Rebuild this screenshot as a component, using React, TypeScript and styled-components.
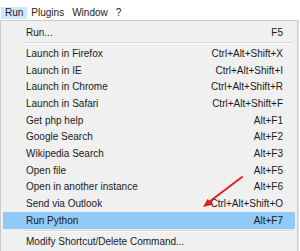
import styled, { createGlobalStyle } from 'styled-components';

type Item = { label: string; shortcut?: string; active?: boolean };

const topItems: Item[] = [{ label: 'Run...', shortcut: 'F5' }];

const launchItems: Item[] = [
  { label: 'Launch in Firefox', shortcut: 'Ctrl+Alt+Shift+X' },
  { label: 'Launch in IE', shortcut: 'Ctrl+Alt+Shift+I' },
  { label: 'Launch in Chrome', shortcut: 'Ctrl+Alt+Shift+R' },
  { label: 'Launch in Safari', shortcut: 'Ctrl+Alt+Shift+F' },
  { label: 'Get php help', shortcut: 'Alt+F1' },
  { label: 'Google Search', shortcut: 'Alt+F2' },
  { label: 'Wikipedia Search', shortcut: 'Alt+F3' },
  { label: 'Open file', shortcut: 'Alt+F5' },
  { label: 'Open in another instance', shortcut: 'Alt+F6' },
  { label: 'Send via Outlook', shortcut: 'Ctrl+Alt+Shift+O' },
  { label: 'Run Python', shortcut: 'Alt+F7', active: true },
];

const bottomItems: Item[] = [{ label: 'Modify Shortcut/Delete Command...' }];

const renderItems = (items: Item[]) =>
  items.map((item) => (
    <Row key={item.label} $active={item.active}>
      <Label>{item.label}</Label>
      {item.shortcut && <Shortcut>{item.shortcut}</Shortcut>}
    </Row>
  ));

const App = () => {
  return (
    <Page>
      <GlobalStyle />
      <MenuBar>
        <BarItem $open>Run</BarItem>
        <BarItem>Plugins</BarItem>
        <BarItem>Window</BarItem>
        <BarItem>?</BarItem>
      </MenuBar>

      <Dropdown>
        {renderItems(topItems)}
        <Separator />
        {renderItems(launchItems)}
        <Separator />
        {renderItems(bottomItems)}
      </Dropdown>

      <Arrow width="300" height="251" viewBox="0 0 300 251">
        <line x1="242" y1="177" x2="209" y2="202" stroke="#e3211c" strokeWidth="2" strokeLinecap="round" />
        <polygon points="203,207 207.5,199 213.5,204.5" fill="#e3211c" />
      </Arrow>
    </Page>
  );
};

export default App;

const GlobalStyle = createGlobalStyle`
  body {
    margin: 0;
    background: #ffffff;
    font-family: "Liberation Sans", Arial, sans-serif;
  }
`;

const Page = styled.div`
  position: relative;
  width: 300px;
  height: 251px;
  overflow: hidden;
  background: #ffffff;
  color: #1a1a1a;
  font-size: 10px;
`;

const MenuBar = styled.div`
  display: flex;
  align-items: flex-end;
  height: 20px;
  padding-left: 1px;
  box-sizing: border-box;
`;

const BarItem = styled.div<{ $open?: boolean }>`
  height: 12px;
  line-height: 12px;
  padding: 0 4px 0 4px;
  margin-bottom: 1px;
  background: ${({ $open }) => ($open ? '#cce8ff' : 'transparent')};
`;

const Dropdown = styled.div`
  width: 298px;
  box-sizing: border-box;
  border: 1px solid #cccccc;
  border-bottom: none;
  background: #f0f0f0;
  padding: 3px 2px 4px 2px;
  box-shadow: 1px 0 0 #e4e4e4;
`;

const Row = styled.div<{ $active?: boolean }>`
  display: flex;
  align-items: center;
  justify-content: space-between;
  height: 16.7px;
  padding: 0 12px 0 23px;
  background: ${({ $active }) => ($active ? '#91c9f7' : 'transparent')};
`;

const Label = styled.span`
  white-space: nowrap;
`;

const Shortcut = styled.span`
  white-space: nowrap;
`;

const Separator = styled.div`
  height: 1px;
  margin: 1px 2px 1.3px 21px;
  background: #d7d7d7;
  border-bottom: 1px solid #fbfbfb;
`;

const Arrow = styled.svg`
  position: absolute;
  left: 0;
  top: 0;
  pointer-events: none;
`;
